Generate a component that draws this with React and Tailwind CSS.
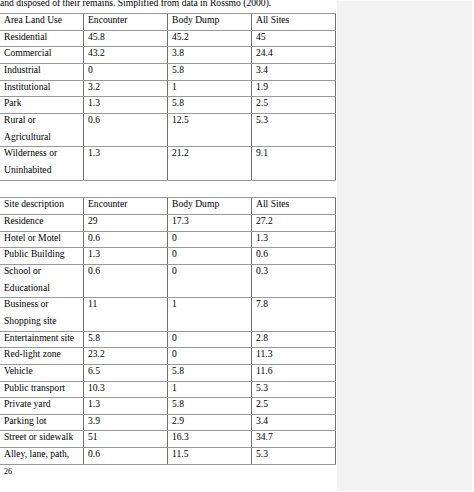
import React from "react";

const table1 = [
  { h: 1, c: ["Area Land Use", "Encounter", "Body Dump", "All Sites"] },
  { h: 1, c: ["Residential", "45.8", "45.2", "45"] },
  { h: 1, c: ["Commercial", "43.2", "3.8", "24.4"] },
  { h: 1, c: ["Industrial", "0", "5.8", "3.4"] },
  { h: 1, c: ["Institutional", "3.2", "1", "1.9"] },
  { h: 1, c: ["Park", "1.3", "5.8", "2.5"] },
  { h: 2, c: [["Rural or", "Agricultural"], "0.6", "12.5", "5.3"] },
  { h: 2, c: [["Wilderness or", "Uninhabited"], "1.3", "21.2", "9.1"] },
];

const table2 = [
  { h: 1, c: ["Site description", "Encounter", "Body Dump", "All Sites"] },
  { h: 1, c: ["Residence", "29", "17.3", "27.2"] },
  { h: 1, c: ["Hotel or Motel", "0.6", "0", "1.3"] },
  { h: 1, c: ["Public Building", "1.3", "0", "0.6"] },
  { h: 2, c: [["School or", "Educational"], "0.6", "0", "0.3"] },
  { h: 2, c: [["Business or", "Shopping site"], "11", "1", "7.8"] },
  { h: 1, c: ["Entertainment site", "5.8", "0", "2.8"] },
  { h: 1, c: ["Red-light zone", "23.2", "0", "11.3"] },
  { h: 1, c: ["Vehicle", "6.5", "5.8", "11.6"] },
  { h: 1, c: ["Public transport", "10.3", "1", "5.3"] },
  { h: 1, c: ["Private yard", "1.3", "5.8", "2.5"] },
  { h: 1, c: ["Parking lot", "3.9", "2.9", "3.4"] },
  { h: 1, c: ["Street or sidewalk", "51", "16.3", "34.7"] },
  { h: 1, c: ["Alley, lane, path,", "0.6", "11.5", "5.3"] },
];

function Cell({ v }) {
  const lines = Array.isArray(v) ? v : [v];
  return (
    <div className="pl-1 overflow-hidden border-r border-[#6e6e6e]">
      <div className="relative -top-[2px] leading-[16.67px] whitespace-nowrap">
        {lines.map((l, i) => (
          <div key={i}>{l}</div>
        ))}
      </div>
    </div>
  );
}

function Table({ rows }) {
  return (
    <div className="w-[336px] border-t border-[#999]">
      {rows.map((r, i) => (
        <div
          key={i}
          className={
            "grid grid-cols-[84px_84px_84px_84px] border-b border-[#999] " +
            (r.h === 2 ? "h-[33.33px]" : "h-[16.67px]")
          }
        >
          {r.c.map((v, j) => (
            <Cell key={j} v={v} />
          ))}
        </div>
      ))}
    </div>
  );
}

export default function App() {
  return (
    <div
      className="w-[474px] h-[492px] bg-white overflow-hidden flex text-black text-[9.6px]"
      style={{ fontFamily: '"Liberation Serif", "Times New Roman", serif' }}
    >
      <div className="w-[336px] shrink-0 flex flex-col">
        <div className="h-[13px] relative">
          <div className="absolute left-0 -top-[5px] leading-[16.67px] whitespace-nowrap">
            and disposed of their remains. Simplified from data in Rossmo (2000).
          </div>
        </div>
        <Table rows={table1} />
        <div className="h-[16.67px]" />
        <Table rows={table2} />
        <div className="pl-1 text-[8px] leading-[12px] pt-[1px]">26</div>
      </div>
      <div className="ml-px w-[135px] h-[490px] mt-px bg-[#f3f3f3]" />
    </div>
  );
}
